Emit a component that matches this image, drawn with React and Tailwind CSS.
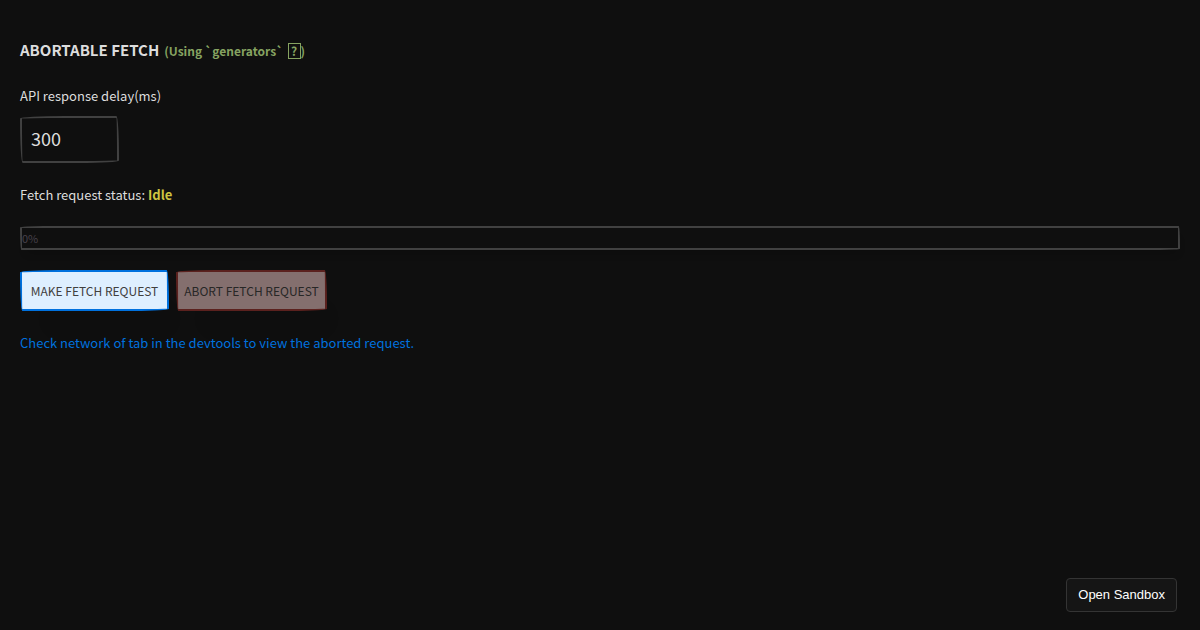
import { useState } from "react";

const sketchy =
	"border-2 rounded-tl-[255px_15px] rounded-tr-[15px_225px] rounded-br-[225px_15px] rounded-bl-[15px_255px]";

export default function App() {
	const [delay, setDelay] = useState(300);
	const [status, setStatus] = useState("Idle");
	const isFetching = status === "Fetching";

	return (
		<div className="min-h-screen bg-[#0f0f0f] px-5 pt-8 font-['Noto_Sans_CJK_JP',sans-serif] text-[13px] text-[#dddddd]">
			<h1 className="flex items-center gap-[5px] text-[15px] leading-9 font-bold">
				ABORTABLE FETCH
				<small className="flex items-center gap-1 pt-px text-xs text-[#86a361]">
					<span>(Using `generators`</span>
					<span className="flex items-center">
						<span className="flex h-4 w-[13px] items-center justify-center border">?</span>)
					</span>
				</small>
			</h1>

			<div className="mt-4 flex flex-col items-start gap-2">
				<label htmlFor="delay" className="leading-6">
					API response delay(ms)
				</label>
				<input
					id="delay"
					type="text"
					inputMode="numeric"
					value={delay}
					onChange={(e) => setDelay(e.target.value)}
					className={`${sketchy} h-[47px] w-[99px] border-[#414141] px-[9px] pb-1 text-lg outline-none`}
				/>
			</div>

			<p className="mt-5 leading-6">
				Fetch request status: <strong className="text-[#d0c441]">{status}</strong>
			</p>

			<div
				className={`${sketchy} mt-[19px] h-6 border-[#414141] text-[11px] leading-5 text-[#46414a] shadow-[2px_8px_8px_-5px_rgba(0,0,0,0.2)]`}
			>
				0%
			</div>

			<div className="mt-5 flex gap-[7px]">
				<button
					type="button"
					onClick={() => setStatus("Fetching")}
					className={`${sketchy} h-[41px] w-[149px] border-[#0071de] bg-[#deefff] text-xs whitespace-nowrap text-[#41403e] shadow-[15px_28px_25px_-18px_rgba(0,0,0,0.2)]`}
				>
					MAKE FETCH REQUEST
				</button>
				<button
					type="button"
					disabled={!isFetching}
					onClick={() => setStatus("Aborted")}
					className={`${sketchy} h-[41px] w-[151px] border-[#a7342d] bg-[#f8cecc] text-xs whitespace-nowrap text-[#41403e] shadow-[15px_28px_25px_-18px_rgba(0,0,0,0.2)] disabled:opacity-50`}
				>
					ABORT FETCH REQUEST
				</button>
			</div>

			<p className="mt-5 leading-6 text-[#0071de]">
				Check network of tab in the devtools to view the aborted request.
			</p>

			<button
				type="button"
				className="fixed right-[23px] bottom-[18px] rounded border border-[#343434] bg-[#151515] px-[11px] py-[7px] font-['Liberation_Sans',sans-serif] text-[13px] leading-[18px] text-white"
			>
				Open Sandbox
			</button>
		</div>
	);
}
